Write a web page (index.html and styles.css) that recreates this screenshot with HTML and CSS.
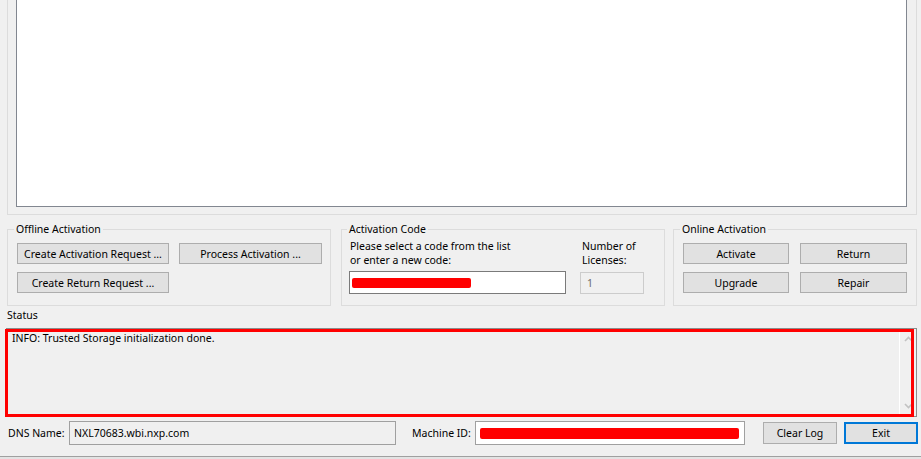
FILE: index.html
```html
<!DOCTYPE html>
<html>
<head>
<meta charset="utf-8">
<link rel="stylesheet" href="styles.css">
</head>
<body>
<div class="window">
  <div class="top-panel"><div class="list-box"></div></div>

  <div class="groups">
    <fieldset class="group offline">
      <legend>Offline Activation</legend>
      <div class="offline-grid">
        <button class="btn w-create">Create Activation Request ...</button>
        <button class="btn w-process">Process Activation ...</button>
        <button class="btn w-create">Create Return Request ...</button>
      </div>
    </fieldset>

    <fieldset class="group code">
      <legend>Activation Code</legend>
      <div class="code-grid">
        <div class="code-col">
          <div class="hint">Please select a code from the list<br>or enter a new code:</div>
          <div class="input code-input"><span class="redact code-redact"></span></div>
        </div>
        <div class="lic-col">
          <div class="hint lic-hint">Number of<br>Licenses:</div>
          <div class="input lic-input">1</div>
        </div>
      </div>
    </fieldset>

    <fieldset class="group online">
      <legend>Online Activation</legend>
      <div class="online-grid">
        <button class="btn">Activate</button>
        <button class="btn">Return</button>
        <button class="btn">Upgrade</button>
        <button class="btn">Repair</button>
      </div>
    </fieldset>
  </div>

  <div class="status-label">Status</div>
  <div class="status-box">
    <div class="status-text">INFO: Trusted Storage initialization done.</div>
    <div class="scrollbar">
      <svg class="chev" width="9" height="6" viewBox="0 0 9 6"><path d="M1 5 L4.5 1.5 L8 5" fill="none" stroke="#c2c2c2" stroke-width="1.6"/></svg>
      <svg class="chev" width="9" height="6" viewBox="0 0 9 6"><path d="M1 1 L4.5 4.5 L8 1" fill="none" stroke="#c2c2c2" stroke-width="1.6"/></svg>
    </div>
    <div class="highlight"></div>
  </div>

  <div class="bottom-row">
    <span class="lbl dns-lbl">DNS Name:</span>
    <div class="input dns-input">NXL70683.wbi.nxp.com</div>
    <span class="lbl mid-lbl">Machine ID:</span>
    <div class="input mid-input"><span class="redact mid-redact"></span></div>
    <button class="btn small clear">Clear Log</button>
    <button class="btn small exit">Exit</button>
  </div>
  <div class="frame-bottom"></div>
</div>
</body>
</html>
```

FILE: styles.css
```css
* { box-sizing: border-box; }
html, body {
  margin: 0;
  padding: 0;
  background: #f0f0f0;
}
body {
  width: 921px;
  height: 459px;
  overflow: hidden;
  font-family: "Noto Sans", "Liberation Sans", sans-serif;
  font-size: 10.5px;
  line-height: 14px;
  color: #000;
  white-space: nowrap;
}

.top-panel {
  margin-left: 7px;
  width: 910px;
  height: 215px;
  border: 1px solid #dcdcdc;
  border-top: none;
  padding: 0 9px 7px 8px;
  display: flex;
}
.list-box {
  flex: 1;
  background: #fff;
  border: 1px solid #828790;
  border-top: none;
}

.groups {
  display: flex;
  margin-top: 7px;
  padding-left: 7px;
  height: 84px;
}
.group {
  margin: 0;
  min-width: 0;
  border: 1px solid #dcdcdc;
  height: 84px;
  padding: 6px 9px 0 9px;
}
.group legend {
  padding: 0 2px;
  margin-left: -3px;
  line-height: 15px;
  font-size: 10.5px;
}
.offline { width: 324px; }
.code { width: 324px; margin-left: 10px; padding: 2px 7px 0 7px; }
.online { width: 244px; margin-left: 8px; }
.code legend { margin-left: -2px; }
.online legend { margin-left: -3px; }

.btn {
  font-family: inherit;
  font-size: 10.5px;
  line-height: 14px;
  height: 21px;
  padding: 0;
  margin: 0;
  background: #e1e1e1;
  border: 1px solid #adadad;
  border-radius: 0;
  color: #000;
  text-align: center;
  white-space: nowrap;
}
.offline-grid {
  display: grid;
  grid-template-columns: 152px 143px;
  column-gap: 10px;
  row-gap: 8px;
}
.online-grid {
  display: grid;
  grid-template-columns: 106px 107px;
  column-gap: 11px;
  row-gap: 8px;
}

.code-grid {
  display: flex;
}
.code-col { width: 217px; }
.lic-col { width: 64px; margin-left: 14px; }
.hint { padding-left: 1px; height: 28px; }
.lic-hint { padding-left: 2px; }
.input {
  background: #fff;
  border: 1px solid #7a7a7a;
  display: flex;
  align-items: center;
  padding-left: 2px;
}
.code-input { margin-top: 4px; height: 23px; }
.lic-input {
  margin-top: 5px;
  height: 22px;
  background: #f0f0f0;
  border-color: #cccccc;
  color: #6d6d6d;
  padding-left: 6px;
}
.redact {
  display: inline-block;
  background: #ff0000;
  border-radius: 2px;
}
.code-redact { width: 119px; height: 10px; margin-top: 1px; }
.mid-redact { width: 259px; height: 11px; margin-left: 2px; margin-top: 1px; }

.status-label {
  margin-top: 2px;
  padding-left: 7px;
  height: 14px;
}
.status-box {
  position: relative;
  margin-top: 6px;
  margin-left: 6px;
  width: 911px;
  height: 89px;
  border: 1px solid #8c8c8c;
  background: #f0f0f0;
}
.status-text {
  padding: 2px 0 0 5px;
}
.scrollbar {
  position: absolute;
  right: 0;
  top: 0;
  bottom: 0;
  width: 17px;
  border-left: 1px solid #ffffff;
  display: flex;
  flex-direction: column;
  justify-content: space-between;
  align-items: center;
  padding: 7px 0 7px 0;
}
.chev { display: block; }
.highlight {
  position: absolute;
  left: -2px;
  top: 0;
  width: 909px;
  height: 88px;
  border: 3px solid #ff0000;
}

.bottom-row {
  display: flex;
  align-items: center;
  margin-top: 4px;
  padding-left: 8px;
  height: 24px;
}
.lbl { display: block; }
.dns-lbl { width: 61px; }
.dns-input {
  width: 327px;
  height: 24px;
  background: #f0f0f0;
  border-color: #a0a0a0;
  padding-left: 4px;
}
.mid-lbl { width: 63px; margin-left: 16px; }
.mid-input { width: 270px; height: 24px; border-color: #a0a0a0; }
.small { width: 74px; height: 22px; }
.clear { margin-left: 18px; }
.exit { margin-left: 7px; border: 2px solid #0078d7; }

.frame-bottom {
  margin-top: 11px;
  height: 3px;
  border-top: 1px solid #a0a0a0;
  background: #e3e3e3;
}
```
